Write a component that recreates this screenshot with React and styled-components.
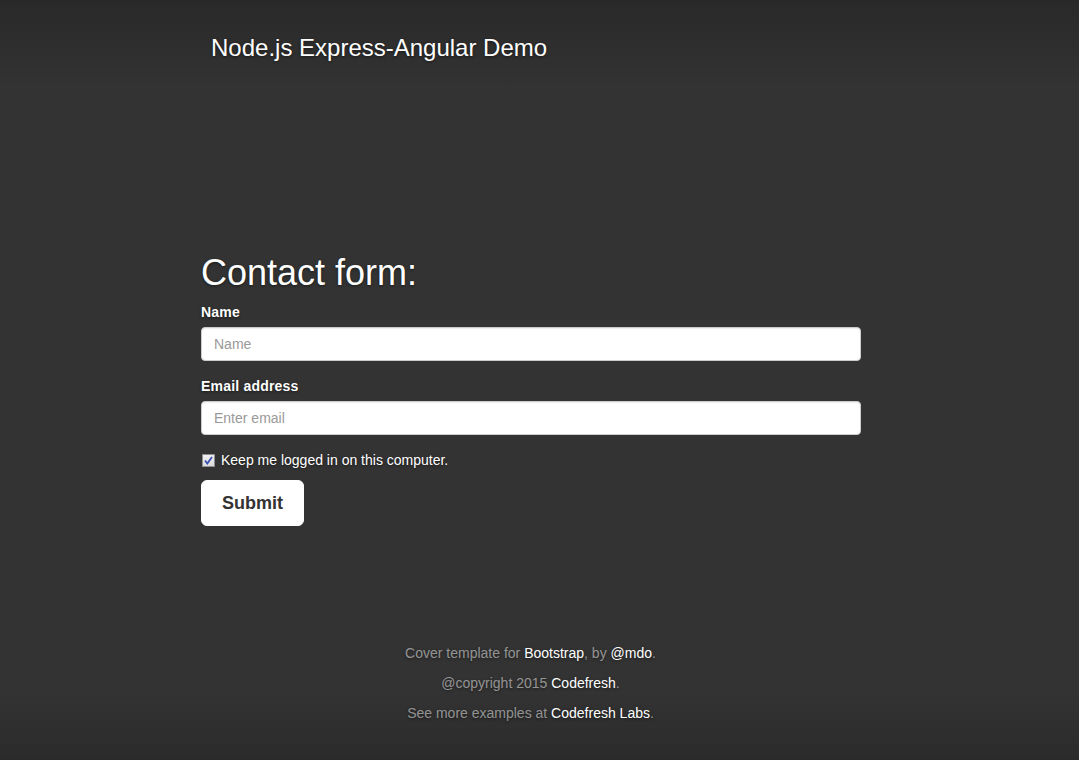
import React from 'react'
import styled, { createGlobalStyle } from 'styled-components';

const GlobalStyle = createGlobalStyle`
  html, body {
    margin: 0;
    padding: 0;
    height: 100%;
  }
  body {
    background-color: #333;
    color: #fff;
    font-family: "Liberation Sans", Arial, Helvetica, sans-serif;
    font-size: 14px;
    line-height: 20px;
    text-shadow: 0 1px 3px rgba(0, 0, 0, .5);
  }
  * {
    box-sizing: border-box;
  }
`;

const Page = styled.div`
  min-height: 760px;
  display: flex;
  flex-direction: column;
  background:
    linear-gradient(to bottom, rgba(0,0,0,.2) 0px, rgba(0,0,0,0) 90px),
    linear-gradient(to top, rgba(0,0,0,.16) 0px, rgba(0,0,0,0) 70px),
    #333;
`;

const Masthead = styled.header`
  padding: 35px 0 0 211px;
`;

const Brand = styled.h3`
  margin: 0;
  font-size: 24px;
  font-weight: normal;
  line-height: 26px;
`;

const Cover = styled.main`
  margin: 192px 0 0 201px;
  width: 660px;
`;

const Title = styled.h1`
  margin: 0 0 9px;
  font-size: 36px;
  font-weight: normal;
  line-height: 40px;
`;

const FormGroup = styled.div`
  margin-bottom: 15px;
`;

const Label = styled.label`
  display: block;
  margin-bottom: 5px;
  font-weight: bold;
  letter-spacing: 0.2px;
`;

const Input = styled.input`
  display: block;
  width: 100%;
  height: 34px;
  padding: 6px 12px;
  font-family: inherit;
  font-size: 14px;
  color: #555;
  background: #fff;
  border: 1px solid #ccc;
  border-radius: 4px;
  box-shadow: inset 0 1px 1px rgba(0, 0, 0, .075);
  outline: none;

  &::placeholder {
    color: #999;
  }
`;

const CheckRow = styled.label`
  display: flex;
  align-items: center;
  gap: 6px;
  margin: 0 0 10px;
  cursor: pointer;
`;

const Box = styled.span`
  display: inline-flex;
  align-items: center;
  justify-content: center;
  width: 13px;
  height: 13px;
  margin-left: 1px;
  border: 1px solid #8e8f8f;
  background: linear-gradient(to bottom, #f0f0f0, #dcdcdc);
`;

const HiddenCheck = styled.input`
  position: absolute;
  opacity: 0;
  width: 0;
  height: 0;
`;

const SubmitButton = styled.button`
  display: inline-block;
  padding: 10px 20px;
  font-family: inherit;
  font-size: 18px;
  font-weight: bold;
  line-height: 24px;
  color: #333;
  text-shadow: none;
  background: #fff;
  border: 1px solid #fff;
  border-radius: 6px;
  cursor: pointer;
`;

const Mastfoot = styled.footer`
  margin-top: auto;
  padding: 0 18px 27px 0;
  text-align: center;
  color: rgba(255, 255, 255, .5);
`;

const FootLine = styled.p`
  margin: 0 0 10px;
`;

const Link = styled.a`
  color: #fff;
  text-decoration: none;
`;

const App = () => {
  return (
    <Page>
      <GlobalStyle />
      <Masthead>
        <Brand>Node.js Express-Angular Demo</Brand>
      </Masthead>

      <Cover>
        <Title>Contact form:</Title>
        <form onSubmit={e => e.preventDefault()}>
          <FormGroup>
            <Label htmlFor="name">Name</Label>
            <Input id="name" type="text" placeholder="Name" />
          </FormGroup>
          <FormGroup>
            <Label htmlFor="email">Email address</Label>
            <Input id="email" type="email" placeholder="Enter email" />
          </FormGroup>
          <CheckRow>
            <HiddenCheck type="checkbox" defaultChecked />
            <Box>
              <svg width="9" height="9" viewBox="0 0 9 9">
                <path d="M1 4.5 L3.3 7.5 L8 1" fill="none" stroke="#3b4fb3" strokeWidth="1.8" />
              </svg>
            </Box>
            Keep me logged in on this computer.
          </CheckRow>
          <SubmitButton type="submit">Submit</SubmitButton>
        </form>
      </Cover>

      <Mastfoot>
        <FootLine>Cover template for <Link href="#">Bootstrap</Link>, by <Link href="#">@mdo</Link>.</FootLine>
        <FootLine>@copyright 2015 <Link href="#">Codefresh</Link>.</FootLine>
        <FootLine>See more examples at <Link href="#">Codefresh Labs</Link>.</FootLine>
      </Mastfoot>
    </Page>
  )
}

export default App;
